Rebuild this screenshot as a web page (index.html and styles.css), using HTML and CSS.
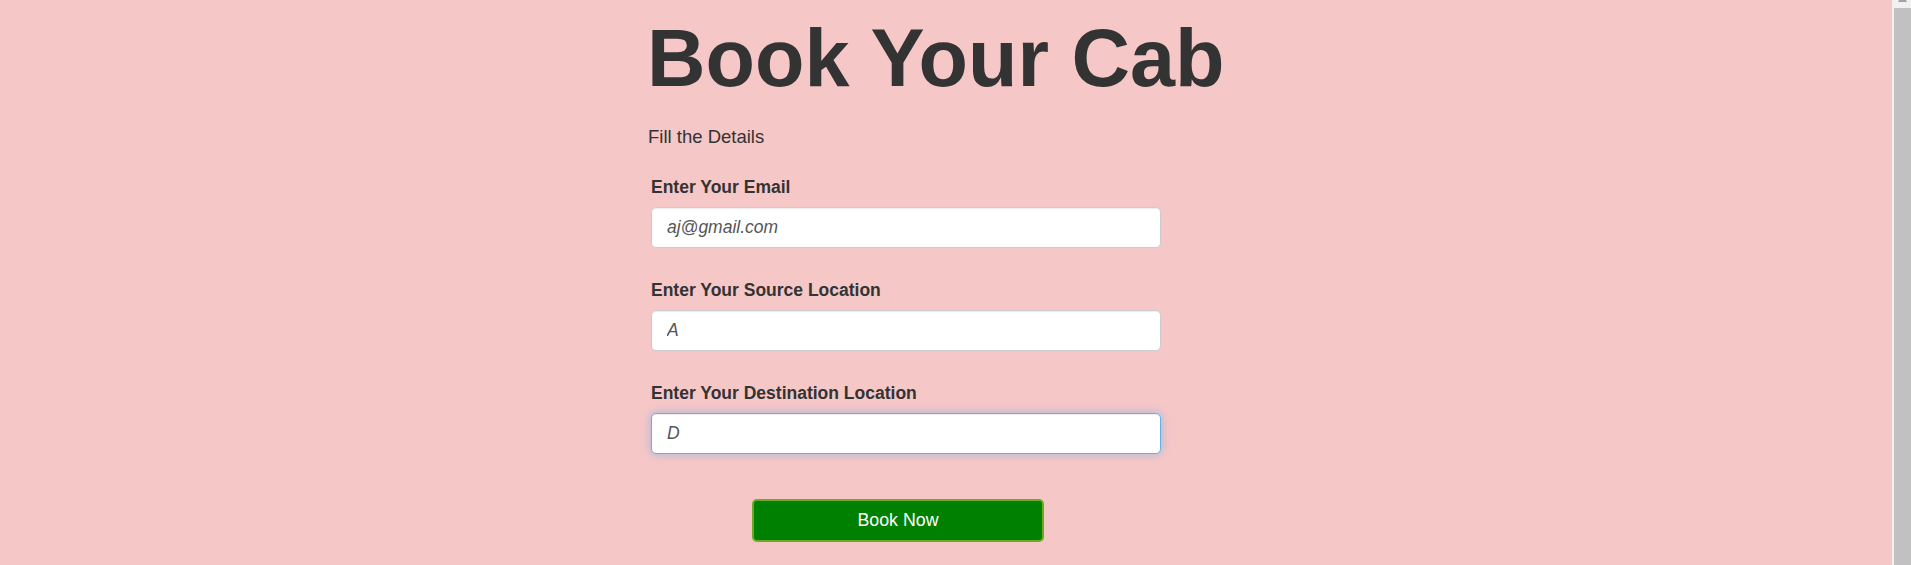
FILE: index.html
```html
<!DOCTYPE html>
<html lang="en">
<head>
<meta charset="utf-8">
<title>Book Your Cab</title>
<link rel="stylesheet" href="styles.css">
</head>
<body>
<main class="page">
  <h1 class="title">Book Your Cab</h1>
  <p class="lead">Fill the Details</p>
  <form class="booking">
    <div class="group">
      <label class="label" for="email">Enter Your Email</label>
      <input class="field" id="email" type="text" value="aj@gmail.com">
    </div>
    <div class="group">
      <label class="label" for="src">Enter Your Source Location</label>
      <input class="field" id="src" type="text" value="A">
    </div>
    <div class="group">
      <label class="label" for="dst">Enter Your Destination Location</label>
      <input class="field field-focus" id="dst" type="text" value="D">
    </div>
    <button class="btn-book" type="button">Book Now</button>
  </form>
</main>
<div class="scrollbar">
  <svg class="sb-arrow" width="9" height="3" viewBox="0 0 9 3"><polygon points="1,0 8,0 9,2 0,2" fill="#a3a3a3"/></svg>
  <div class="sb-thumb"></div>
</div>
</body>
</html>
```
FILE: styles.css
```css
html, body {
  margin: 0;
  padding: 0;
  height: 100%;
  overflow: hidden;
}
body {
  background: #f6c7c7;
  font-family: "Liberation Sans", Arial, sans-serif;
  color: #333;
}
.page {
  padding: 12px 0 0 647px;
}
.title {
  margin: 0;
  font-size: 81px;
  line-height: 92px;
  font-weight: bold;
  color: #333;
}
.lead {
  margin: 20px 0 0 1px;
  font-size: 18.5px;
  line-height: 26px;
  color: #333;
}
.booking {
  margin: 25px 0 0 4px;
  width: 510px;
  display: flex;
  flex-direction: column;
}
.group {
  display: flex;
  flex-direction: column;
  margin-bottom: 30px;
}
.group:last-of-type {
  margin-bottom: 45px;
}
.label {
  font-size: 17.5px;
  line-height: 24px;
  font-weight: bold;
  margin-bottom: 8px;
  color: #333;
}
.field {
  box-sizing: border-box;
  width: 510px;
  height: 41px;
  padding: 0 14px 0 15px;
  border: 1px solid #ccc;
  border-radius: 5px;
  background: #fff;
  box-shadow: inset 0 1px 1px rgba(0, 0, 0, 0.075);
  font-family: "Liberation Sans", Arial, sans-serif;
  font-size: 17.5px;
  font-style: italic;
  color: #555;
  outline: none;
}
.field-focus {
  border-color: #66afe9;
  box-shadow: inset 0 1px 1px rgba(0, 0, 0, 0.075), 0 0 10px rgba(102, 175, 233, 0.6);
}
.btn-book {
  align-self: flex-start;
  margin-left: 101px;
  width: 292px;
  height: 43px;
  box-sizing: border-box;
  background: #008000;
  border: 2px solid #6aab22;
  border-radius: 5px;
  color: #fff;
  font-family: "Liberation Sans", Arial, sans-serif;
  font-size: 17.8px;
  padding: 0;
  cursor: pointer;
}
.scrollbar {
  position: fixed;
  top: 0;
  right: 0;
  width: 19px;
  height: 100%;
  background: #f1f1f1;
}
.sb-arrow {
  position: absolute;
  top: 0;
  left: 6px;
}
.sb-thumb {
  position: absolute;
  top: 8px;
  left: 2px;
  right: 0;
  bottom: 0;
  background: #c1c1c1;
}
```
